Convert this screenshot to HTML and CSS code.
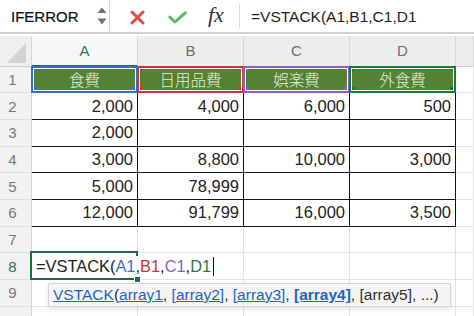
FILE: index.html
```html
<!DOCTYPE html>
<html lang="ja">

<head>
    <meta charset="UTF-8">
    <meta name="viewport" content="width=device-width, initial-scale=1.0">
    <title>VSTACK</title>
    <link rel="stylesheet" href="styles.css">
</head>

<body>
    <div class="formula-bar">
        <div class="name-box">
            <span class="name">IFERROR</span>
            <svg class="spin" width="10" height="20" viewBox="0 0 10 20">
                <path d="M5 1.5 L9.5 7 H0.5 Z M0.5 12.5 H9.5 L5 18.5 Z" fill="#727272" />
            </svg>
        </div>
        <div class="actions">
            <svg class="cancel" width="15" height="15" viewBox="0 0 15 15">
                <path d="M2 2 L13 13 M13 2 L2 13" stroke="#e1474d" stroke-width="3" stroke-linecap="round" />
            </svg>
            <svg class="enter" width="19" height="13" viewBox="0 0 19 13">
                <path d="M1.8 6.2 L7 11 L17.2 1.8" stroke="#5fb559" stroke-width="3" fill="none"
                    stroke-linecap="round" stroke-linejoin="round" />
            </svg>
            <span class="fx">fx</span>
        </div>
        <div class="formula">=VSTACK(A1,B1,C1,D1</div>
    </div>

    <div class="sheet">
        <div class="corner"><span class="tri"></span></div>
        <div class="ch current">A</div>
        <div class="ch">B</div>
        <div class="ch">C</div>
        <div class="ch">D</div>
        <div class="ch"></div>

        <div class="rh">1</div>
        <div class="cell head ref-a">食費</div>
        <div class="cell head ref-b">日用品費</div>
        <div class="cell head ref-c">娯楽費</div>
        <div class="cell head ref-d">外食費</div>
        <div class="cell"></div>

        <div class="rh">2</div>
        <div class="cell box">2,000</div>
        <div class="cell box">4,000</div>
        <div class="cell box">6,000</div>
        <div class="cell box">500</div>
        <div class="cell"></div>

        <div class="rh">3</div>
        <div class="cell box">2,000</div>
        <div class="cell box"></div>
        <div class="cell box"></div>
        <div class="cell box"></div>
        <div class="cell"></div>

        <div class="rh">4</div>
        <div class="cell box">3,000</div>
        <div class="cell box">8,800</div>
        <div class="cell box">10,000</div>
        <div class="cell box">3,000</div>
        <div class="cell"></div>

        <div class="rh">5</div>
        <div class="cell box">5,000</div>
        <div class="cell box">78,999</div>
        <div class="cell box"></div>
        <div class="cell box"></div>
        <div class="cell"></div>

        <div class="rh">6</div>
        <div class="cell box">12,000</div>
        <div class="cell box">91,799</div>
        <div class="cell box">16,000</div>
        <div class="cell box">3,500</div>
        <div class="cell"></div>

        <div class="rh">7</div>
        <div class="cell"></div>
        <div class="cell"></div>
        <div class="cell"></div>
        <div class="cell"></div>
        <div class="cell"></div>

        <div class="rh current">8</div>
        <div class="cell active">
            <span class="edit">=VSTACK(<span class="r-a">A1</span>,<span class="r-b">B1</span>,<span
                    class="r-c">C1</span>,<span class="r-d">D1</span><i class="caret"></i></span>
        </div>
        <div class="cell"></div>
        <div class="cell"></div>
        <div class="cell"></div>
        <div class="cell"></div>

        <div class="rh">9</div>
        <div class="cell"></div>
        <div class="cell"></div>
        <div class="cell"></div>
        <div class="cell"></div>
        <div class="cell"></div>

        <div class="rh"></div>
        <div class="cell"></div>
        <div class="cell"></div>
        <div class="cell"></div>
        <div class="cell"></div>
        <div class="cell"></div>

        <div class="tip"><a>VSTACK</a>(<a>array1</a>, <a>[array2]</a>, <a>[array3]</a>, <a class="now">[array4]</a>, [array5], ...)</div>
    </div>
</body>

</html>
```

FILE: styles.css
```css
html,
body {
    margin: 0;
    height: 316px;
    overflow: hidden;
    background-color: #fff;
    font-family: "Liberation Sans", Arial, sans-serif;
    color: #222;
}

/* formula bar */

.formula-bar {
    display: flex;
    height: 32px;
    border-bottom: 2px solid #d2d2d2;
    margin-bottom: 2px;
}

.name-box {
    display: flex;
    align-items: center;
    width: 110px;
    box-sizing: border-box;
    padding-left: 11px;
    border-right: 1px solid #d4d4d4;
}

.name {
    font-size: 15px;
    color: #111;
    width: 86px;
    -webkit-text-stroke: 0.2px #111;
}

.spin {
    display: block;
}

.actions {
    display: flex;
    align-items: center;
    width: 130px;
    box-sizing: border-box;
    padding-left: 20px;
    margin: 4px 0;
    border-right: 1px solid #dcdcdc;
}

.cancel {
    display: block;
    margin-top: 2px;
}

.enter {
    display: block;
    margin-left: 23px;
    margin-top: 2px;
}

.fx {
    margin-left: 21px;
    font-family: "Liberation Serif", serif;
    font-style: italic;
    font-size: 22px;
    color: #333;
    margin-top: -2px;
}

.formula {
    display: flex;
    align-items: center;
    padding-left: 11px;
    padding-top: 2px;
    font-size: 15.5px;
    color: #1e1e1e;
}

/* grid */

.sheet {
    position: relative;
    display: grid;
    grid-template-columns: 32px repeat(4, 106px) 1fr;
    grid-template-rows: 30.67px repeat(10, 26.67px);
}

.corner {
    position: relative;
    background-color: #efefef;
    border-right: 1px solid #d6d6d6;
    border-bottom: 1px solid #d0d0d0;
}

.tri {
    position: absolute;
    right: 5px;
    bottom: 3px;
    width: 0;
    height: 0;
    border-left: 19px solid transparent;
    border-bottom: 20px solid #d3d3d3;
}

.ch {
    display: flex;
    align-items: center;
    justify-content: center;
    background-color: #ededed;
    border-right: 1px solid #d6d6d6;
    border-bottom: 1px solid #cfcfcf;
    font-size: 15px;
    color: #6c6c6c;
}

.ch.current {
    background-color: #f6f6f6;
    color: #2a7a4b;
    border-bottom: 2px solid #21703f;
}

.rh {
    display: flex;
    align-items: center;
    justify-content: center;
    padding-right: 6px;
    background-color: #f2f2f2;
    border-right: 1px solid #d2d2d2;
    border-bottom: 1px solid #dedede;
    font-size: 15px;
    color: #777;
}

.rh.current {
    color: #2a7a4b;
}

.cell {
    position: relative;
    display: flex;
    align-items: center;
    justify-content: flex-end;
    padding-right: 4px;
    border-right: 1px solid #e1e1e1;
    border-bottom: 1px solid #e1e1e1;
    font-size: 16.5px;
    color: #222;
    white-space: nowrap;
}

.cell.box {
    border-right: 1px solid #111;
    border-bottom: 1px solid #111;
}

/* row 1 titles with the formula's range frames */

.cell.head {
    justify-content: center;
    padding-right: 0;
    background-color: #548235;
    border-bottom: 1px solid #111;
    font-family: "Noto Sans CJK JP", sans-serif;
    font-weight: 300;
    font-size: 15.5px;
    color: #e9eedc;
}

.ref-a {
    --c: #3a6ec6;
}

.ref-b {
    --c: #cc3440;
}

.ref-c {
    --c: #8c5fcc;
}

.ref-d {
    --c: #1d7a37;
}

.head::after {
    content: "";
    position: absolute;
    top: -1px;
    left: -1px;
    right: -1px;
    bottom: -1px;
    border: 2px solid var(--c);
    box-shadow: inset 0 0 0 1px #fff;
    background:
        linear-gradient(var(--c), var(--c)) left top / 5px 5px no-repeat border-box,
        linear-gradient(var(--c), var(--c)) right top / 5px 5px no-repeat border-box,
        linear-gradient(var(--c), var(--c)) left bottom / 6px 6px no-repeat border-box,
        linear-gradient(var(--c), var(--c)) right bottom / 6px 6px no-repeat border-box;
    background-origin: border-box;
}

/* active cell in edit mode */

.cell.active {
    justify-content: flex-start;
    padding-left: 4px;
    padding-right: 0;
}

.active::after {
    content: "";
    position: absolute;
    top: -2px;
    left: -2px;
    right: -1px;
    bottom: -1px;
    border: 2px solid #1f6e3c;
}

.active::before {
    content: "";
    position: absolute;
    right: -4px;
    bottom: -4px;
    width: 5px;
    height: 5px;
    background-color: #1f6e3c;
    border: 1px solid #fff;
    z-index: 2;
}

.edit {
    position: relative;
    z-index: 3;
    display: flex;
    align-items: center;
    height: 21px;
    padding-right: 3px;
    background-color: #fff;
    font-size: 16.4px;
    color: #222;
}

.r-a {
    color: #3a6ec6;
}

.r-b {
    color: #c8333f;
}

.r-c {
    color: #8a5dc9;
}

.r-d {
    color: #2a7a3d;
}

.caret {
    display: block;
    width: 1px;
    height: 19px;
    margin-left: 2px;
    background-color: #111;
}

/* function tooltip */

.tip {
    position: absolute;
    left: 48px;
    top: 247px;
    width: 403px;
    height: 24px;
    box-sizing: border-box;
    padding-left: 4px;
    line-height: 22px;
    background-color: #f5f5f5;
    border: 1px solid #d3d3d3;
    border-radius: 2px;
    box-shadow: 0 2px 5px rgba(0, 0, 0, 0.12);
    font-size: 15.5px;
    color: #2e2e2e;
    white-space: nowrap;
}

.tip a {
    color: #2463c7;
    text-decoration: underline;
}

.tip a.now {
    font-weight: bold;
}
```
